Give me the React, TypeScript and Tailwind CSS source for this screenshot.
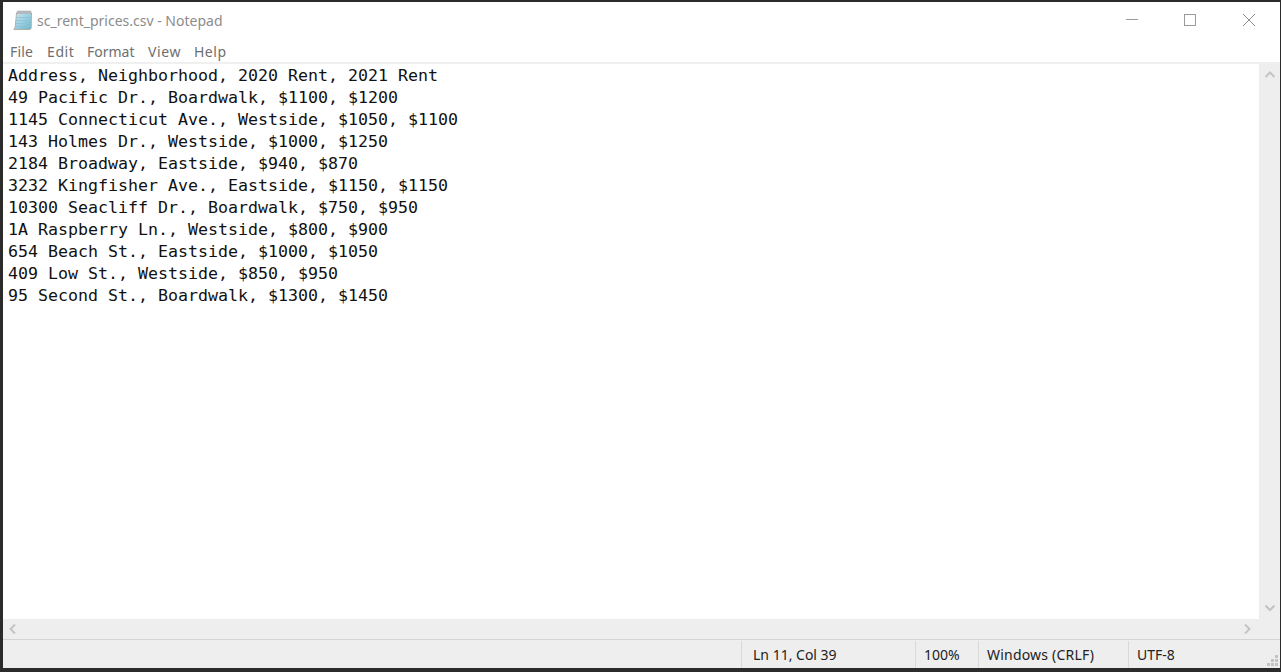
const lines = [
  "Address, Neighborhood, 2020 Rent, 2021 Rent",
  "49 Pacific Dr., Boardwalk, $1100, $1200",
  "1145 Connecticut Ave., Westside, $1050, $1100",
  "143 Holmes Dr., Westside, $1000, $1250",
  "2184 Broadway, Eastside, $940, $870",
  "3232 Kingfisher Ave., Eastside, $1150, $1150",
  "10300 Seacliff Dr., Boardwalk, $750, $950",
  "1A Raspberry Ln., Westside, $800, $900",
  "654 Beach St., Eastside, $1000, $1050",
  "409 Low St., Westside, $850, $950",
  "95 Second St., Boardwalk, $1300, $1450",
];

function NotepadIcon() {
  return (
    <svg width="20" height="20" viewBox="0 0 20 20">
      <defs>
        <linearGradient id="np" x1="0" y1="0" x2="1" y2="1">
          <stop offset="0" stopColor="#cfeaf2" />
          <stop offset="0.5" stopColor="#9ccfe0" />
          <stop offset="1" stopColor="#6db3cb" />
        </linearGradient>
      </defs>
      <path d="M3.5 3L18.5 3L18.2 18.2L17 19.5L0.8 19.5L2.2 17z" fill="url(#np)" stroke="#a8a594" strokeWidth="0.8" />
      <path d="M3.2 7.5h14.8M3 10.5h15M2.6 13.5h15.4M2.3 16.5h15.6" stroke="#8cc3d6" strokeWidth="0.8" />
      <path d="M4.2 0.8h14v3.2h-14.8z" fill="#8f9a9f" />
      <path d="M5 0.5v3.6M7 0.5v3.6M9 0.5v3.6M11 0.5v3.6M13 0.5v3.6M15 0.5v3.6M17 0.5v3.6" stroke="#e8e8e8" strokeWidth="0.8" />
    </svg>
  );
}

function Chevron({ d }: { d: string }) {
  return (
    <svg width="10" height="10" viewBox="0 0 10 10">
      <path d={d} fill="none" stroke="#c4c4c4" strokeWidth="2" />
    </svg>
  );
}

export default function App() {
  return (
    <div className="w-[1281px] h-[672px] bg-[#2b2b2b] pt-[2px] pl-[3px] pr-[1px] pb-[4px] overflow-hidden font-['Noto_Sans',sans-serif]">
      <div className="h-full flex flex-col bg-white">
        <div className="h-[40px] pb-[4px] flex items-center shrink-0">
          <div className="ml-[10px] mr-[4px] flex items-center"><NotepadIcon /></div>
          <span className="text-[14px] text-[#8c8c8c]">sc_rent_prices.csv - Notepad</span>
          <div className="ml-auto flex items-center h-full">
            <div className="w-[58px] pl-[2px] flex justify-center">
              <svg width="12" height="12" viewBox="0 0 12 12"><path d="M0 5.5h12" stroke="#9a9a9a" strokeWidth="1" /></svg>
            </div>
            <div className="w-[60px] flex justify-center">
              <svg width="12" height="12" viewBox="0 0 12 12"><rect x="0.5" y="0.5" width="11" height="11" fill="none" stroke="#9a9a9a" /></svg>
            </div>
            <div className="w-[58px] flex justify-center mr-[2px]">
              <svg width="12" height="12" viewBox="0 0 12 12"><path d="M0 0l12 12M12 0L0 12" stroke="#8e8e8e" strokeWidth="1" /></svg>
            </div>
          </div>
        </div>
        <div className="h-[20px] flex items-center pl-[7px] text-[14px] leading-[20px] text-[#6e6e6e] shrink-0">
          <span className="w-[37px] tracking-[0.2px]">File</span>
          <span className="w-[40px] tracking-[0.6px]">Edit</span>
          <span className="w-[61px]">Format</span>
          <span className="w-[46px] tracking-[0.6px]">View</span>
          <span className="tracking-[0.5px]">Help</span>
        </div>
        <div className="h-[2px] bg-[#f0f0f0] shrink-0" />
        <div className="flex-1 flex min-h-0">
          <div className="flex-1 pl-[5px] pt-[1px] font-['DejaVu_Sans_Mono',monospace] text-[16.63px] leading-[22px] text-[#111] whitespace-pre">
            {lines.map((l) => (
              <div key={l}>{l}</div>
            ))}
          </div>
          <div className="w-[21px] bg-[#eeeeee] flex flex-col items-center justify-between py-[5px]">
            <Chevron d="M0.5 8L5 3.5 9.5 8" />
            <Chevron d="M0.5 1.5L5 6l4.5-4.5" />
          </div>
        </div>
        <div className="h-[20px] bg-[#eeeeee] flex items-center justify-between pl-[5px] pr-[27px] shrink-0">
          <Chevron d="M7 0.5L2.5 5 7 9.5" />
          <Chevron d="M2 0.5L6.5 5 2 9.5" />
        </div>
        <div className="h-[29px] bg-[#eeeeee] border-t border-[#d4d4d4] flex items-stretch text-[14px] text-[#222] pt-[1px] shrink-0 relative">
          <div className="w-[738px]" />
          <div className="w-[174px] border-l border-[#d9d9d9] pl-[11px] flex items-center">Ln 11, Col 39</div>
          <div className="w-[63px] border-l border-[#d9d9d9] pl-[8px] flex items-center">100%</div>
          <div className="w-[150px] border-l border-[#d9d9d9] pl-[8px] flex items-center tracking-[0.2px]">Windows (CRLF)</div>
          <div className="flex-1 border-l border-[#d9d9d9] pl-[8px] flex items-center">UTF-8</div>
          <svg className="absolute right-[1px] bottom-[1px]" width="12" height="12" viewBox="0 0 12 12" fill="#c4c4c4">
            <rect x="8" y="0" width="3" height="3" />
            <rect x="4" y="4" width="3" height="3" />
            <rect x="8" y="4" width="3" height="3" />
            <rect x="0" y="8" width="3" height="3" />
            <rect x="4" y="8" width="3" height="3" />
            <rect x="8" y="8" width="3" height="3" />
          </svg>
        </div>
      </div>
    </div>
  );
}
